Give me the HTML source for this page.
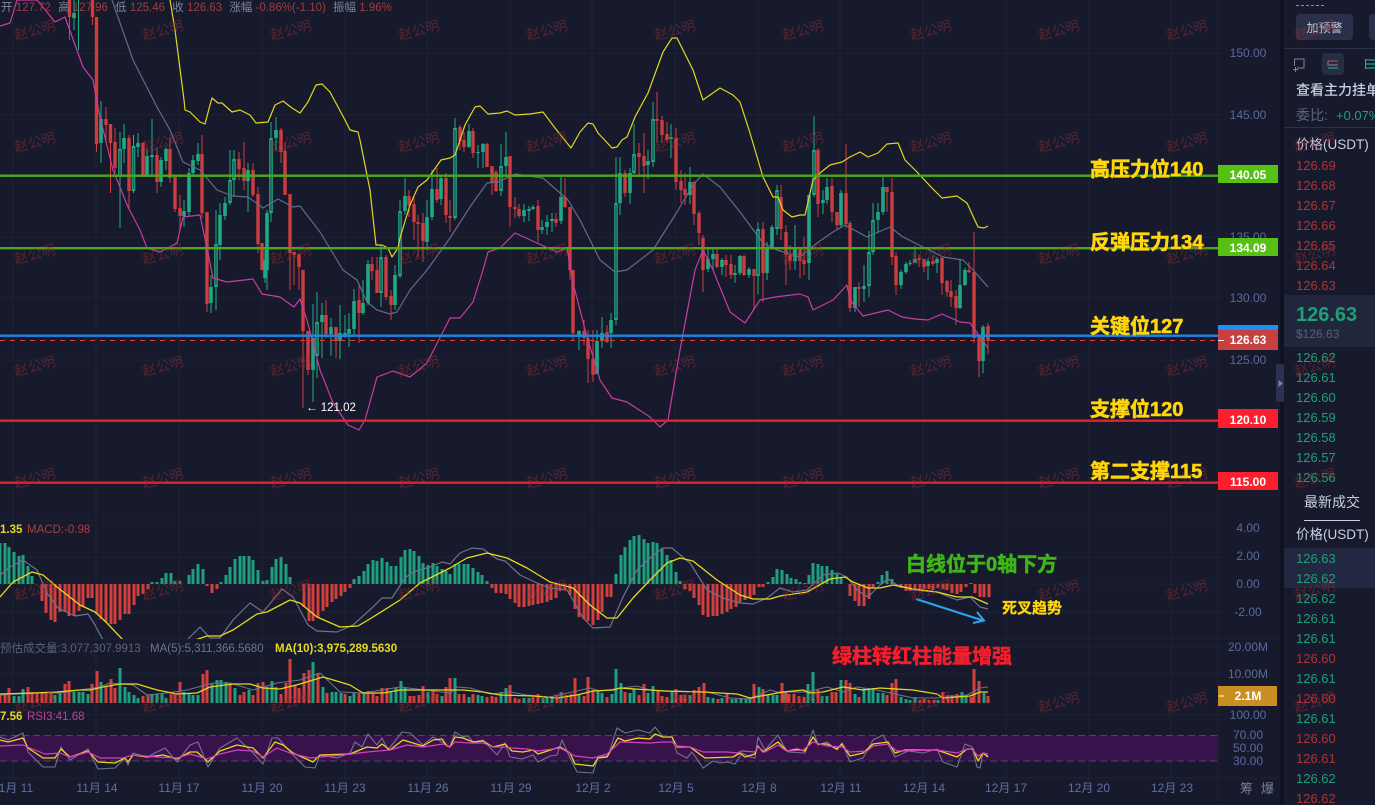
<!DOCTYPE html>
<html lang="zh"><head><meta charset="utf-8"><title>Chart</title>
<style>
html,body{margin:0;padding:0;width:1375px;height:805px;overflow:hidden;background:#161a2c}
svg{display:block}
text{font-family:"Liberation Sans","Noto Sans CJK SC",sans-serif;font-size:12px}
.ax{fill:#5a6a9c;font-size:12px;text-anchor:middle}
.tg{fill:#fff;font-size:12px;font-weight:bold;text-anchor:middle}
.an{font-size:20px;font-weight:bold;fill:#ffd60a;stroke:#ffd60a;stroke-width:.6}
.wm{fill:#8f2f38;font-size:14px;opacity:.5;text-anchor:middle}
.r{fill:#b03333;font-size:13px}
.g{fill:#1f9f78;font-size:13px}
.l{fill:#7e849c;font-size:11.5px}
.v{fill:#9c3d42;font-size:11.5px}
.h{fill:#c9cfe2;font-size:13.5px}
.d{fill:#5f6f9f;font-size:12px;text-anchor:middle}
</style></head><body>
<svg width="1375" height="805" viewBox="0 0 1375 805" xmlns="http://www.w3.org/2000/svg">
<rect width="1375" height="805" fill="#161a2c"/>
<!-- grid -->
<path d="M13 0V780M96 0V780M179 0V780M262 0V780M345 0V780M427 0V780M510 0V780M592 0V780M675 0V780M758 0V780M840 0V780M923 0V780M1006 0V780M1089 0V780M1171 0V780M1218 0V805M0 53H1224M0 115H1224M0 176H1224M0 237H1224M0 298H1224M0 360H1224M0 421H1224M0 483H1224M0 520H1224M0 557H1224M0 584H1224M0 612H1224M0 639H1278M0 647H1224M0 674H1224M0 715H1224M0 778H1278" stroke="#1f2435" stroke-width="1" fill="none"/>
<!-- candles: wicks -->
<g fill="none">
<path stroke="#cf3e3e" stroke-width="1" d="M69.5 0V40M92.5 0V25M96.5 17V152M106 107V143M110.5 124V193M115 128V173M129 135V210M143 142V177M157 147V193M170 137V183M175 177V212M180 195V230M202 135V218M207 212V312M239 152V180M244 142V190M253 163V197M258 187V253M262 243V270M281 128V163M285 142V195M290 194V290M294 252V285M299 254V290M303 270V408M308 331V375M326 300V338M336 327V358M359 283V343M372 257V280M377 257V293M386 255V300M391 290V320M409 190V217M414 197V240M418 215V257M423 213V262M437 168V203M446 173V223M450 200V232M460 125V150M464 132V152M473 128V158M487 143V167M492 166V195M496 170V192M510 156V227M515 197V218M519 204V218M538 200V242M556 213V227M565 178V208M570 207V280M573 270V341M584 320V345M588 330V383M593 330V382M607 325V343M625 170V197M639 143V175M644 133V193M657 92V143M662 116V143M667 122V143M676 128V190M681 170V203M685 173V205M694 181V225M699 211V245M703 235V292M717 249V268M726 255V277M731 255V279M744 255V276M754 269V310M763 222V302M781 185V240M786 225V285M790 245V270M800 248V278M804 237V275M818 148V217M832 178V222M837 212V230M846 144V228M850 221V312M859 282V307M887 187V212M892 178V265M896 252V295M919 255V267M924 259V272M933 255V266M942 257V295M947 280V297M951 280V307M956 290V325M969 262V273M974 232V343M979 337V377M988 323V354"/>
<path stroke="#1fb088" stroke-width="1" d="M74 0V30M78.5 0V50M101 101V163M120 132V228M124 124V163M133.5 135V193M138 133V157M147 148V177M152 119V177M161 157V187M166 147V170M184 200V227M189 168V217M193 155V175M198 143V165M216 210V310M211 275V313M220 203V260M225 197V220M230 150V205M234 150V197M248 163V212M265 250V283M267 210V290M271 122V222M276 117V150M313 304V402M317 292V378M322 303V358M331 318V356M340 305V359M345 315V338M349 313V347M354 289V335M363 280V315M368 260V305M381 245V307M395 265V310M400 200V278M405 178V215M427 200V250M432 170V220M441 175V205M455 118V220M469 124V148M478 145V168M483 143V168M501 144V196M506 132V175M524 204V222M529 206V221M533 205V210M542 220V234M547 215V235M552 213V232M561 175V224M579 330V350M597 330V374M602 317V348M611 313V348M616 157V325M620 157V215M630 168V204M634 124V174M648 150V179M653 102V167M671 124V158M690 167V204M708 249V272M713 249V270M722 258V275M735 265V283M740 255V275M749 267V278M758 222V294M767 242V280M772 225V249M777 185V235M795 225V270M809 195V280M814 116V197M823 190V214M827 178V204M841 190V228M855 287V312M864 265V302M869 231V297M873 203V255M878 203V233M883 177V215M901 270V289M906 262V274M910 260V266M915 246V263M928 258V280M937 257V273M960 260V309M965 268V286M983 325V373"/>
<path stroke="#cc3d3d" stroke-width="3.4" d="M69.5 0V17M92.5 0V17M96.5 17V144M106 119V125M110.5 124V143M115 142V168M129 138V191M143 143V176M157 155V182M170 149V178M175 177V209M180 208V216M202 154V213M207 212V304M239 159V169M244 168V181M253 170V195M258 194V244M262 243V270M281 130V152M285 151V195M290 194V253M294 252V255M299 254V267M303 270V331M308 331V370M326 315V334M336 327V341M359 300V313M372 264V271M377 270V293M386 257V297M391 296V305M409 196V205M414 204V222M418 222V224M423 223V241M437 189V200M446 178V215M450 216V218M460 127V141M464 140V147M473 131V153M487 144V167M492 166V183M496 172V191M510 156V207M515 207V209M519 209V216M538 206V230M556 219V223M565 197V207M570 207V270M573 270V333M584 331V338M588 338V359M593 359V375M607 332V342M625 173V193M639 153V157M644 156V166M657 119V121M662 120V135M667 134V140M676 138V182M681 181V190M685 189V195M694 182V214M699 213V233M703 238V270M717 254V267M726 260V265M731 264V275M744 256V275M754 269V276M763 229V273M781 197V229M786 232V255M790 255V261M800 249V261M804 260V264M818 150V204M832 186V212M837 212V225M846 193V224M850 223V308M859 287V289M887 187V192M892 192V257M896 256V285M919 258V260M924 259V267M933 261V264M942 258V283M947 281V292M951 291V297M956 296V308M969 270V272M974 272V338M979 337V361M988 326V341"/>
<path stroke="#20a884" stroke-width="3.6" d="M74 13V18M101 119V143M120 149V177M124 138V149M133.5 146V191M138 143V147M147 156V176M152 155V157M161 160V182M166 149V161M184 211V216M189 173V212M193 160V173M198 154V161M216 244V287M211 287V303M220 215V245M225 203V216M230 180V203M234 159V180M248 170V181M265 260V278M267 213V270M271 138V213M276 130V138M313 338V370M317 322V356M322 315V322M331 327V334M340 333V341M345 333V335M349 329V334M354 301V329M363 303V313M368 264V303M381 257V293M395 275V305M400 211V276M405 196V211M427 217V242M432 189V217M441 178V199M455 128V218M469 131V147M478 152V153M483 144V152M501 166V191M506 157V166M524 210V216M529 209V211M533 207V209M542 227V230M547 222V227M552 219V221M561 197V221M579 331V337M597 341V374M602 333V341M611 320V333M616 203V320M620 173V203M630 173V193M634 154V173M648 161V165M653 119V162M671 137V139M690 182V195M708 259V269M713 254V259M722 260V267M735 273V275M740 256V273M749 269V275M758 229V276M767 247V273M772 227V247M777 190V229M795 249V261M809 195V263M814 150V195M823 200V203M827 187V200M841 193V225M855 287V308M864 286V289M869 252V286M873 220V252M878 212V220M883 187V212M901 272V285M906 264V272M910 263V264M915 259V263M928 261V266M937 259V263M960 285V308M965 270V285M983 327V361"/>
<path stroke="#1e5f58" stroke-width="1.6" d="M133.5 148V189M216 246V285M271 140V211M400 213V274M455 130V216M616 205V318M653 121V160M758 231V274M777 192V227M814 152V193M869 254V284M120 151V175M230 182V201M234 161V178M317 324V354M381 259V291M501 168V189M634 156V171M873 222V250"/>
</g>
<!-- BOLL -->
<g fill="none" stroke-linejoin="round">
<polyline stroke="#e3d521" stroke-width="1.2" points="170,0 175,30 184,100 185,110 190,112 200,122 205,124 210,105 212,98 218,103 222,103 232,112 240,110 250,115 256,123 268,122 275,105 283,101 292,108 300,113 308,102 316,85 322,84 330,92 345,120 350,130 358,132 360,140 370,190 376,245 382,245 388,248 392,257 398,248 400,238 410,205 418,187 427,180 441,160 450,158 455,155 465,125 475,107 480,106 488,114 500,113 507,111 515,115 530,114 543,112 555,128 571,148 580,132 588,123 593,124 598,133 612,148 617,147 622,140 627,137 635,117 648,93 663,52 672,38 677,38 693,70 703,100 710,95 720,88 733,95 740,102 750,133 763,177 773,197 778,197 783,210 792,217 800,215 805,215 813,180 820,173 830,165 842,162 850,157 860,152 868,157 878,153 887,144 898,143 905,160 917,172 932,188 942,198 957,196 967,203 978,227 984,228 988,226"/>
<polyline stroke="#66698a" stroke-width="1.2" points="112,0 133,60 157,107 170,130 183,162 200,170 217,190 233,196 248,197 263,208 278,199 293,207 300,206 320,232 343,270 357,280 367,302 377,310 390,314 397,312 410,290 427,270 450,238 470,207 487,183 498,182 515,174 543,178 568,200 580,220 600,260 615,272 627,270 653,250 677,212 693,185 703,174 720,187 740,212 763,243 777,250 800,257 817,243 833,232 845,225 867,237 890,227 903,237 943,257 963,260 973,270 988,287"/>
<polyline stroke="#c93ba5" stroke-width="1.2" points="0,26 10,23 17,0 37,0 55,22 65,17 83,67 93,80 100,117 113,170 128,207 140,230 147,248 160,252 177,243 183,217 200,215 208,253 213,278 227,282 253,279 262,294 280,297 294,307 300,299 307,320 320,370 333,403 348,425 359,430 365,420 377,377 393,371 410,377 427,363 450,318 460,318 473,302 483,270 488,252 500,248 515,233 537,243 557,252 567,248 573,283 587,337 600,380 612,398 627,402 650,417 660,427 668,420 680,350 695,270 703,250 713,270 730,312 745,323 760,300 775,297 800,294 808,297 813,310 833,300 847,285 850,300 863,316 888,310 902,317 915,319 928,320 942,314 960,322 970,323 988,348"/>
</g>
<!-- levels -->
<rect x="0" y="174.5" width="1218" height="2.4" fill="#4ba81a"/>
<rect x="0" y="247" width="1218" height="2.4" fill="#4ba81a"/>
<rect x="0" y="334.5" width="1218" height="2.4" fill="#1f86e0"/>
<path d="M0 340.5H1218" stroke="#d93f45" stroke-width="1" stroke-dasharray="5 5"/>
<rect x="0" y="419.5" width="1218" height="2.4" fill="#e8202e"/>
<rect x="0" y="481.5" width="1218" height="2.4" fill="#e8202e"/>
<text x="306" y="411" style="font-size:11.5px;fill:#fff">← 121.02</text>
<!-- MACD histogram -->
<path fill="none" stroke="#1f9f7e" stroke-width="3" d="M0 584V543M5 584V543M9 584V547M14 584V552M19 584V556M23 584V555M28 584V566M32 584V576M152 584V582M157 584V582M162 584V578M166 584V573M171 584V573M175 584V581M180 584V581M189 584V575M193 584V569M198 584V564M203 584V569M221 584V582M226 584V575M230 584V567M235 584V559M240 584V556M244 584V556M249 584V556M253 584V560M258 584V570M263 584V581M267 584V580M272 584V567M276 584V559M281 584V557M286 584V564M290 584V577M354 584V579M359 584V576M364 584V571M368 584V564M373 584V560M377 584V561M382 584V558M387 584V562M391 584V566M396 584V566M401 584V557M405 584V550M410 584V549M414 584V551M419 584V556M423 584V563M428 584V565M433 584V563M437 584V566M442 584V569M446 584V571M450 584V574M455 584V564M459 584V564M464 584V564M468 584V564M473 584V568M478 584V572M482 584V575M487 584V581M616 584V574M621 584V555M625 584V547M630 584V540M634 584V536M639 584V535M644 584V539M648 584V543M653 584V542M657 584V543M662 584V548M667 584V555M671 584V560M676 584V572M680 584V581M768 584V582M773 584V577M777 584V569M782 584V570M787 584V574M791 584V578M796 584V579M800 584V582M805 584V583M809 584V575M813 584V563M818 584V564M822 584V566M827 584V566M832 584V570M837 584V574M841 584V578M878 584V582M882 584V575M887 584V571M892 584V579M971 584V583"/>
<path fill="none" stroke="#d2403d" stroke-width="3" d="M42 584V601M46 584V613M51 584V620M55 584V622M60 584V612M65 584V612M69 584V616M74 584V616M79 584V611M83 584V607M88 584V598M92 584V598M97 584V614M101 584V619M106 584V622M111 584V624M115 584V624M120 584V620M125 584V614M129 584V614M134 584V605M138 584V596M143 584V594M148 584V589M207 584V586M212 584V593M217 584V589M304 584V607M309 584V621M313 584V621M318 584V618M323 584V611M327 584V607M332 584V602M336 584V599M341 584V596M345 584V592M350 584V588M492 584V588M496 584V593M501 584V593M506 584V594M510 584V599M515 584V603M519 584V607M524 584V607M529 584V606M533 584V605M538 584V604M542 584V603M547 584V602M551 584V600M556 584V598M560 584V591M565 584V590M570 584V595M575 584V609M579 584V617M584 584V619M588 584V621M593 584V625M598 584V620M602 584V612M607 584V597M611 584V597M685 584V589M690 584V591M694 584V598M699 584V605M703 584V615M708 584V617M713 584V616M717 584V616M722 584V614M727 584V612M731 584V609M736 584V607M740 584V602M745 584V600M750 584V598M754 584V595M759 584V587M763 584V587M850 584V596M855 584V601M859 584V606M864 584V606M869 584V599M873 584V588M896 584V586M901 584V588M906 584V591M910 584V591M915 584V590M920 584V590M924 584V589M929 584V589M933 584V590M938 584V588M943 584V589M947 584V590M952 584V593M957 584V594M961 584V592M966 584V587M975 584V593M980 584V597M984 584V597M989 584V597"/>
<clipPath id="mc"><rect x="0" y="520" width="1218" height="119"/></clipPath>
<g clip-path="url(#mc)" fill="none" stroke-linejoin="round">
<polyline stroke="#6d7290" stroke-width="1.2" points="0,575 10,567 23,560 37,570 47,593 58,608 75,616 88,614 95,625 103,640 187,640 200,627 210,638 220,638 233,620 250,603 263,612 282,589 293,597 308,625 317,631 337,632 353,625 373,607 382,598 392,598 405,578 413,572 430,567 442,562 450,564 460,553 472,548 483,549 497,559 505,561 520,575 537,583 550,588 567,590 573,600 583,618 593,628 610,627 623,597 637,570 650,558 663,548 672,548 690,563 707,590 723,598 740,603 753,604 767,598 780,588 793,592 807,590 823,575 838,573 847,577 857,590 868,597 880,585 888,579 897,585 913,590 937,592 957,600 970,597 980,607 988,609"/>
<polyline stroke="#e9d91c" stroke-width="1.3" points="0,597 13,582 32,572 43,575 57,587 80,605 95,612 107,623 123,640 195,640 207,636 220,636 233,630 257,614 267,612 290,600 300,603 317,617 340,627 358,626 373,617 400,600 420,583 450,568 467,558 487,553 507,558 527,568 550,582 573,588 590,605 607,618 617,618 633,598 650,580 667,563 680,558 693,561 717,580 740,595 753,599 770,599 780,596 807,592 830,579 845,577 853,582 868,588 880,588 893,585 913,589 937,592 957,597 972,597 988,604"/>
</g>
<!-- arrow -->
<path d="M916 599L983 620.5M973 623L984 620.5L977 612" fill="none" stroke="#2ea3f2" stroke-width="2"/>
<!-- Volume -->
<path fill="none" stroke="#1f9f7e" stroke-width="3" d="M14 703V696M19 703V696M23 703V689M55 703V695M60 703V693M74 703V692M79 703V692M83 703V692M88 703V694M101 703V682M120 703V668M125 703V687M129 703V692M134 703V695M138 703V698M152 703V694M157 703V694M162 703V694M166 703V698M184 703V692M189 703V694M193 703V695M198 703V695M212 703V684M217 703V680M221 703V680M226 703V682M235 703V688M249 703V690M267 703V687M272 703V681M276 703V687M313 703V662M323 703V687M332 703V692M336 703V692M341 703V693M350 703V696M354 703V693M364 703V692M391 703V692M396 703V688M401 703V681M405 703V687M428 703V692M442 703V696M455 703V678M469 703V697M478 703V695M482 703V696M501 703V692M506 703V688M524 703V698M529 703V698M543 703V698M547 703V698M552 703V698M561 703V692M579 703V694M598 703V691M602 703V693M612 703V694M616 703V669M621 703V683M630 703V693M634 703V689M648 703V693M653 703V686M672 703V691M690 703V695M708 703V697M713 703V698M722 703V698M732 703V699M736 703V699M741 703V699M746 703V699M750 703V698M759 703V687M768 703V695M773 703V695M777 703V695M785 703V692M808 703V684M813 703V672M822 703V696M827 703V696M841 703V680M855 703V694M864 703V688M869 703V688M873 703V688M878 703V693M883 703V693M901 703V697M906 703V699M910 703V700M915 703V697M938 703V700M962 703V692M966 703V697M984 703V693"/>
<path fill="none" stroke="#d2403d" stroke-width="3" d="M0 703V694M5 703V694M9 703V688M28 703V687M32 703V692M37 703V693M42 703V692M46 703V692M51 703V693M65 703V684M69 703V681M92 703V684M97 703V671M106 703V687M111 703V679M115 703V688M143 703V696M148 703V695M171 703V694M175 703V693M180 703V682M203 703V674M207 703V670M230 703V683M240 703V695M244 703V692M253 703V695M258 703V683M263 703V682M281 703V694M286 703V683M290 703V659M295 703V685M299 703V688M304 703V673M309 703V670M318 703V673M327 703V693M345 703V694M359 703V693M368 703V691M373 703V693M377 703V696M382 703V688M387 703V688M410 703V696M414 703V696M419 703V695M423 703V686M433 703V690M437 703V694M446 703V687M450 703V678M459 703V694M464 703V694M473 703V694M487 703V697M492 703V696M496 703V697M510 703V685M515 703V698M519 703V699M533 703V697M538 703V694M557 703V695M566 703V695M571 703V694M575 703V678M584 703V696M588 703V677M593 703V690M607 703V697M625 703V692M639 703V695M644 703V684M658 703V691M662 703V696M667 703V697M676 703V689M681 703V695M685 703V695M694 703V690M699 703V687M704 703V683M718 703V699M727 703V693M754 703V684M763 703V689M782 703V683M786 703V692M789 703V694M794 703V694M799 703V696M804 703V697M818 703V690M832 703V692M836 703V692M846 703V680M850 703V683M859 703V697M887 703V695M892 703V683M896 703V679M920 703V700M924 703V699M929 703V700M934 703V700M943 703V692M948 703V695M952 703V695M957 703V694M971 703V697M974 703V669M979 703V681M988 703V696"/>
<g fill="none" stroke-linejoin="round">
<polyline stroke="#6d7290" stroke-width="1.1" points="0,695 40,693 60,693 80,690 100,687 110,683 133,685 147,695 167,693 187,690 213,683 230,683 253,690 277,683 300,680 320,673 340,692 363,693 400,687 450,693 457,687 470,688 490,694 510,692 527,695 550,697 590,688 600,691 637,686 650,690 670,691 707,692 730,698 750,699 770,690 777,692 807,692 827,687 843,692 857,687 877,690 913,698 937,698 967,695 980,688 988,687"/>
<polyline stroke="#e5d41b" stroke-width="1.3" points="0,694 33,693 57,692 80,690 90,690 103,687 120,684 137,684 157,690 177,694 197,693 210,687 233,684 250,684 263,688 280,689 300,684 323,677 340,682 350,685 363,693 383,693 400,690 427,690 450,690 463,690 483,692 500,695 533,696 557,698 577,695 593,691 613,690 620,688 650,690 663,691 703,692 737,694 750,698 783,692 803,690 810,693 823,692 843,687 863,690 880,688 913,690 937,694 943,698 970,696 980,692 988,692"/>
</g>
<!-- RSI -->
<rect x="0" y="735.5" width="1218" height="25.5" fill="#38134b"/>
<path d="M0 735.5H1218M0 761H1218" stroke="#454866" stroke-dasharray="7 4" fill="none"/>
<g fill="none" stroke-linejoin="round">
<polyline stroke="#70758f" stroke-width="1.1" points="0,737 8,740 23,733 28,752 43,767 55,767 61,747 70,760 88,749 98,769 115,768 125,758 128,765 133,753 147,757 165,748 177,762 190,745 198,742 208,767 220,748 237,738 253,753 263,764 272,738 278,738 293,755 305,767 315,768 320,755 337,758 350,753 355,742 362,747 368,734 377,745 382,738 388,750 402,732 410,733 423,745 433,737 442,742 450,747 455,732 463,737 468,736 473,742 483,740 497,755 505,743 510,757 522,759 533,755 538,762 550,756 557,755 562,740 570,758 577,772 593,773 598,757 608,756 617,728 625,733 638,730 650,733 655,727 663,737 672,737 677,753 687,758 692,752 703,768 713,761 720,763 727,762 735,764 742,753 750,757 755,758 758,737 765,750 778,735 785,748 788,752 805,753 813,730 818,745 827,742 837,750 842,743 850,762 863,758 873,740 883,735 895,757 908,751 923,753 937,749 943,762 957,767 965,744 972,747 977,767 980,768 983,753 988,756"/>
<polyline stroke="#e8d71a" stroke-width="1.3" points="0,740 8,742 23,738 28,748 43,758 55,758 61,749 70,757 88,751 98,762 115,763 125,758 128,762 133,755 147,757 163,755 177,759 190,752 197,752 208,762 220,751 237,745 253,748 263,758 275,742 283,745 293,753 313,762 320,755 350,754 367,747 377,748 382,744 390,750 403,740 423,746 433,740 442,739 447,746 450,747 455,737 463,738 473,742 483,741 493,747 505,744 512,751 523,752 533,750 538,754 560,747 570,753 575,764 593,766 598,758 607,757 618,738 625,741 638,738 650,739 655,734 663,737 672,737 677,747 690,747 705,758 733,757 740,753 745,757 755,754 758,746 763,752 778,742 785,749 787,751 797,749 805,751 813,737 818,744 827,744 837,749 842,744 850,756 863,753 873,744 888,742 895,753 905,750 937,750 957,757 967,749 973,749 978,761 983,753 988,757"/>
<polyline stroke="#d63fc0" stroke-width="1.2" points="0,746 23,745 30,748 45,754 60,753 70,757 88,752 100,758 123,758 133,755 157,757 177,758 190,754 207,759 220,754 237,750 253,751 263,757 277,748 290,753 310,758 343,755 367,752 390,750 407,745 423,747 443,744 450,747 455,742 470,743 483,743 493,747 505,747 512,748 527,749 538,751 560,748 575,756 593,758 607,754 620,742 650,743 663,742 672,742 677,746 690,747 703,752 727,752 737,753 742,751 755,752 758,747 765,752 778,745 785,750 787,751 803,750 813,742 827,746 842,747 850,752 867,751 873,746 888,744 897,751 937,750 957,753 967,749 972,749 978,756 983,753 988,754"/>
</g>
<!-- watermarks -->
<g>
<text class="wm" transform="translate(36,35) rotate(-15)">赵公明</text><text class="wm" transform="translate(164,35) rotate(-15)">赵公明</text><text class="wm" transform="translate(292,35) rotate(-15)">赵公明</text><text class="wm" transform="translate(420,35) rotate(-15)">赵公明</text><text class="wm" transform="translate(548,35) rotate(-15)">赵公明</text><text class="wm" transform="translate(676,35) rotate(-15)">赵公明</text><text class="wm" transform="translate(804,35) rotate(-15)">赵公明</text><text class="wm" transform="translate(932,35) rotate(-15)">赵公明</text><text class="wm" transform="translate(1060,35) rotate(-15)">赵公明</text><text class="wm" transform="translate(1188,35) rotate(-15)">赵公明</text>
<text class="wm" transform="translate(36,147) rotate(-15)">赵公明</text><text class="wm" transform="translate(164,147) rotate(-15)">赵公明</text><text class="wm" transform="translate(292,147) rotate(-15)">赵公明</text><text class="wm" transform="translate(420,147) rotate(-15)">赵公明</text><text class="wm" transform="translate(548,147) rotate(-15)">赵公明</text><text class="wm" transform="translate(676,147) rotate(-15)">赵公明</text><text class="wm" transform="translate(804,147) rotate(-15)">赵公明</text><text class="wm" transform="translate(932,147) rotate(-15)">赵公明</text><text class="wm" transform="translate(1060,147) rotate(-15)">赵公明</text><text class="wm" transform="translate(1188,147) rotate(-15)">赵公明</text>
<text class="wm" transform="translate(36,259) rotate(-15)">赵公明</text><text class="wm" transform="translate(164,259) rotate(-15)">赵公明</text><text class="wm" transform="translate(292,259) rotate(-15)">赵公明</text><text class="wm" transform="translate(420,259) rotate(-15)">赵公明</text><text class="wm" transform="translate(548,259) rotate(-15)">赵公明</text><text class="wm" transform="translate(676,259) rotate(-15)">赵公明</text><text class="wm" transform="translate(804,259) rotate(-15)">赵公明</text><text class="wm" transform="translate(932,259) rotate(-15)">赵公明</text><text class="wm" transform="translate(1060,259) rotate(-15)">赵公明</text><text class="wm" transform="translate(1188,259) rotate(-15)">赵公明</text>
<text class="wm" transform="translate(36,371) rotate(-15)">赵公明</text><text class="wm" transform="translate(164,371) rotate(-15)">赵公明</text><text class="wm" transform="translate(292,371) rotate(-15)">赵公明</text><text class="wm" transform="translate(420,371) rotate(-15)">赵公明</text><text class="wm" transform="translate(548,371) rotate(-15)">赵公明</text><text class="wm" transform="translate(676,371) rotate(-15)">赵公明</text><text class="wm" transform="translate(804,371) rotate(-15)">赵公明</text><text class="wm" transform="translate(932,371) rotate(-15)">赵公明</text><text class="wm" transform="translate(1060,371) rotate(-15)">赵公明</text><text class="wm" transform="translate(1188,371) rotate(-15)">赵公明</text>
<text class="wm" transform="translate(36,483) rotate(-15)">赵公明</text><text class="wm" transform="translate(164,483) rotate(-15)">赵公明</text><text class="wm" transform="translate(292,483) rotate(-15)">赵公明</text><text class="wm" transform="translate(420,483) rotate(-15)">赵公明</text><text class="wm" transform="translate(548,483) rotate(-15)">赵公明</text><text class="wm" transform="translate(676,483) rotate(-15)">赵公明</text><text class="wm" transform="translate(804,483) rotate(-15)">赵公明</text><text class="wm" transform="translate(932,483) rotate(-15)">赵公明</text><text class="wm" transform="translate(1060,483) rotate(-15)">赵公明</text><text class="wm" transform="translate(1188,483) rotate(-15)">赵公明</text>
<text class="wm" transform="translate(36,595) rotate(-15)">赵公明</text><text class="wm" transform="translate(164,595) rotate(-15)">赵公明</text><text class="wm" transform="translate(292,595) rotate(-15)">赵公明</text><text class="wm" transform="translate(420,595) rotate(-15)">赵公明</text><text class="wm" transform="translate(548,595) rotate(-15)">赵公明</text><text class="wm" transform="translate(676,595) rotate(-15)">赵公明</text><text class="wm" transform="translate(804,595) rotate(-15)">赵公明</text><text class="wm" transform="translate(932,595) rotate(-15)">赵公明</text><text class="wm" transform="translate(1060,595) rotate(-15)">赵公明</text><text class="wm" transform="translate(1188,595) rotate(-15)">赵公明</text>
<text class="wm" transform="translate(36,707) rotate(-15)">赵公明</text><text class="wm" transform="translate(164,707) rotate(-15)">赵公明</text><text class="wm" transform="translate(292,707) rotate(-15)">赵公明</text><text class="wm" transform="translate(420,707) rotate(-15)">赵公明</text><text class="wm" transform="translate(548,707) rotate(-15)">赵公明</text><text class="wm" transform="translate(676,707) rotate(-15)">赵公明</text><text class="wm" transform="translate(804,707) rotate(-15)">赵公明</text><text class="wm" transform="translate(932,707) rotate(-15)">赵公明</text><text class="wm" transform="translate(1060,707) rotate(-15)">赵公明</text><text class="wm" transform="translate(1188,707) rotate(-15)">赵公明</text>
</g>
<!-- annotations -->
<text class="an" x="1090" y="176">高压力位140</text>
<text class="an" x="1090" y="249">反弹压力134</text>
<text class="an" x="1090" y="333">关键位127</text>
<text class="an" x="1090" y="416">支撑位120</text>
<text class="an" x="1090" y="478">第二支撑115</text>
<text class="an" x="906" y="571" style="fill:#3fb518;stroke:#3fb518">白线位于0轴下方</text>
<text class="an" x="1002" y="613" style="font-size:15px;stroke-width:.3">死叉趋势</text>
<text class="an" x="832" y="663" style="fill:#f21f2d;stroke:#f21f2d">绿柱转红柱能量增强</text>
<!-- legends -->
<text x="1" y="11"><tspan class="l">开 </tspan><tspan class="v">127.72 </tspan><tspan class="l" dx="4">高 </tspan><tspan class="v">127.96 </tspan><tspan class="l" dx="4">低 </tspan><tspan class="v">125.46 </tspan><tspan class="l" dx="4">收 </tspan><tspan class="v">126.63 </tspan><tspan class="l" dx="4">涨幅 </tspan><tspan class="v">-0.86%(-1.10) </tspan><tspan class="l" dx="4">振幅 </tspan><tspan class="v">1.96%</tspan></text>
<text x="0" y="533" style="fill:#e8d81c;font-weight:bold;font-size:11.5px">1.35</text>
<text x="27" y="533" style="fill:#b53a3f;font-size:11.5px">MACD:-0.98</text>
<text x="0" y="652" style="fill:#5c6078;font-size:11.5px">预估成交量:3,077,307.9913</text>
<text x="150" y="652" style="fill:#6d7290;font-size:11.5px">MA(5):5,311,366.5680</text>
<text x="275" y="652" style="fill:#e8d81c;font-weight:bold;font-size:11.5px">MA(10):3,975,289.5630</text>
<text x="0" y="720" style="fill:#e8d81c;font-weight:bold;font-size:11.5px">7.56</text>
<text x="27" y="720" style="fill:#c93ba5;font-size:11.5px">RSI3:41.68</text>
<!-- dates -->
<text class="d" x="13" y="792">11月 11</text><text class="d" x="97" y="792">11月 14</text><text class="d" x="179" y="792">11月 17</text><text class="d" x="262" y="792">11月 20</text><text class="d" x="345" y="792">11月 23</text><text class="d" x="428" y="792">11月 26</text><text class="d" x="511" y="792">11月 29</text><text class="d" x="593" y="792">12月 2</text><text class="d" x="676" y="792">12月 5</text><text class="d" x="759" y="792">12月 8</text><text class="d" x="841" y="792">12月 11</text><text class="d" x="924" y="792">12月 14</text><text class="d" x="1006" y="792">12月 17</text><text class="d" x="1089" y="792">12月 20</text><text class="d" x="1172" y="792">12月 23</text>
<text x="1240" y="793" style="fill:#7a7f96;font-size:13px">筹</text><text x="1261" y="793" style="fill:#7a7f96;font-size:13px">爆</text>
<!-- axis -->
<text class="ax" x="1248" y="57">150.00</text><text class="ax" x="1248" y="119">145.00</text><text class="ax" x="1248" y="241">135.00</text><text class="ax" x="1248" y="302">130.00</text><text class="ax" x="1248" y="364">125.00</text>
<text class="ax" x="1248" y="532">4.00</text><text class="ax" x="1248" y="560">2.00</text><text class="ax" x="1248" y="588">0.00</text><text class="ax" x="1248" y="616">-2.00</text>
<text class="ax" x="1248" y="651">20.00M</text><text class="ax" x="1248" y="678">10.00M</text><text class="ax" x="1248" y="719">100.00</text><text class="ax" x="1248" y="739">70.00</text><text class="ax" x="1248" y="752">50.00</text><text class="ax" x="1248" y="765">30.00</text>
<!-- tags -->
<rect x="1218" y="165" width="60" height="18" fill="#57c014"/><text class="tg" x="1248" y="179">140.05</text>
<rect x="1218" y="238" width="60" height="18" fill="#57c014"/><text class="tg" x="1248" y="252">134.09</text>
<rect x="1218" y="325" width="60" height="5" fill="#1e90f5"/>
<rect x="1218" y="330" width="60" height="20" fill="#c84141"/><text class="tg" x="1248" y="344">126.63</text>
<path d="M1218 340.5H1224" stroke="#fff"/>
<rect x="1218" y="409" width="60" height="19" fill="#fb1f2e"/><text class="tg" x="1248" y="424">120.10</text>
<rect x="1218" y="472" width="60" height="18" fill="#fb1f2e"/><text class="tg" x="1248" y="486">115.00</text>
<rect x="1218" y="686" width="59" height="20" fill="#c98f25"/>
<path d="M1219 696H1224" stroke="#fff"/>
<text class="tg" x="1248" y="700">2.1M</text>
<!-- gutter / panel -->
<rect x="1280" y="0" width="4" height="805" fill="#0f1220"/>
<rect x="1276" y="364" width="8" height="38" rx="2" fill="#2c3252"/>
<path d="M1278.5 380L1283 383.5L1278.5 387Z" fill="#7a84a8"/>
<rect x="0" y="802" width="1280" height="1" fill="#0f1220"/>
<rect x="1284" y="0" width="91" height="805" fill="#161a2c"/>
<path d="M1296 5.5H1326" stroke="#8a8fa5" stroke-dasharray="3 2"/>
<rect x="1296" y="14" width="57" height="26" rx="4" fill="#2a3049"/>
<text x="1324.5" y="32" style="fill:#c6cbdd;font-size:12px;text-anchor:middle">加预警</text>
<rect x="1369" y="14" width="10" height="26" rx="4" fill="#2a3049"/>
<rect x="1284" y="48" width="91" height="1" fill="#2b314a"/>
<path d="M1294.5 66V59H1304V68H1297M1293 69.5H1298M1295.5 67V72" fill="none" stroke="#7d8398" stroke-width="1"/>
<rect x="1322" y="53" width="22" height="22" rx="4" fill="#272d45"/>
<path d="M1328 61H1338" stroke="#c24040" stroke-width="1.2"/><path d="M1328 68H1338" stroke="#1f9f78" stroke-width="1.2"/><path d="M1328 61V65H1338" fill="none" stroke="#7d8398" stroke-width="1"/>
<path d="M1366 60H1376M1366 64H1376M1366 68H1376" stroke="#1f9f78" stroke-width="1.2"/><path d="M1365.5 59V69" stroke="#7d8398"/>
<text x="1296" y="95" style="fill:#c9cfe2;font-size:14px;font-weight:500">查看主力挂单</text>
<text x="1296" y="120" style="fill:#5e6480;font-size:14px">委比:</text>
<text x="1336" y="120" style="fill:#1f9f78;font-size:13px">+0.07%</text>
<rect x="1284" y="127" width="91" height="1" fill="#2b314a"/>
<text class="h" x="1296" y="149">价格(USDT)</text>
<text class="r" x="1296" y="170">126.69</text><text class="r" x="1296" y="190">126.68</text><text class="r" x="1296" y="210">126.67</text><text class="r" x="1296" y="230">126.66</text><text class="r" x="1296" y="250">126.65</text><text class="r" x="1296" y="270">126.64</text><text class="r" x="1296" y="290">126.63</text>
<rect x="1284" y="295" width="91" height="52" fill="#20263c"/>
<text x="1296" y="321" style="fill:#1f9f78;font-size:20px;font-weight:bold">126.63</text>
<text x="1296" y="338" style="fill:#5a6078;font-size:12px">$126.63</text>
<text class="g" x="1296" y="362">126.62</text><text class="g" x="1296" y="382">126.61</text><text class="g" x="1296" y="402">126.60</text><text class="g" x="1296" y="422">126.59</text><text class="g" x="1296" y="442">126.58</text><text class="g" x="1296" y="462">126.57</text><text class="g" x="1296" y="482">126.56</text>
<text x="1304" y="507" style="fill:#c9cfe2;font-size:14px">最新成交</text>
<rect x="1304" y="520" width="56" height="1" fill="#c9cfe2"/>
<text class="h" x="1296" y="539">价格(USDT)</text>
<rect x="1284" y="548" width="91" height="40" fill="#222842"/>
<text class="g" x="1296" y="563">126.63</text><text class="g" x="1296" y="583">126.62</text><text class="g" x="1296" y="603">126.62</text><text class="g" x="1296" y="623">126.61</text><text class="g" x="1296" y="643">126.61</text><text class="r" x="1296" y="663">126.60</text><text class="g" x="1296" y="683">126.61</text><text class="r" x="1296" y="703">126.60</text><text class="g" x="1296" y="723">126.61</text><text class="r" x="1296" y="743">126.60</text><text class="r" x="1296" y="763">126.61</text><text class="g" x="1296" y="783">126.62</text><text class="r" x="1296" y="803">126.62</text>
<!-- panel watermarks -->
<text class="wm" transform="translate(1316,707) rotate(-15)">赵公明</text><text class="wm" transform="translate(1316,595) rotate(-15)">赵公明</text><text class="wm" transform="translate(1316,483) rotate(-15)">赵公明</text><text class="wm" transform="translate(1316,371) rotate(-15)">赵公明</text><text class="wm" transform="translate(1316,259) rotate(-15)">赵公明</text><text class="wm" transform="translate(1316,147) rotate(-15)">赵公明</text><text class="wm" transform="translate(1316,35) rotate(-15)">赵公明</text>
</svg>
</body></html>
